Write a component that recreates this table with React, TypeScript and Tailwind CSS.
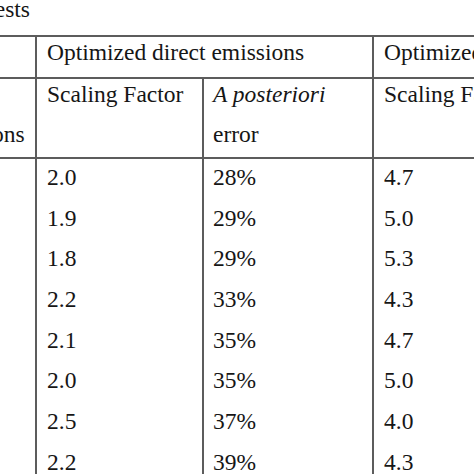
import React from "react";

const rows: [string, string, string][] = [
  ["2.0", "28%", "4.7"],
  ["1.9", "29%", "5.0"],
  ["1.8", "29%", "5.3"],
  ["2.2", "33%", "4.3"],
  ["2.1", "35%", "4.7"],
  ["2.0", "35%", "5.0"],
  ["2.5", "37%", "4.0"],
  ["2.2", "39%", "4.3"],
];

export default function App() {
  return (
    <div
      className="w-[474px] h-[474px] overflow-hidden bg-white text-[#161616] text-[23.5px]"
      style={{ fontFamily: '"Liberation Serif", "Times New Roman", serif' }}
    >
      <div className="h-[35px] w-[30px] flex justify-end whitespace-nowrap leading-[18px]">
        <span>Table 3. Results of the sensitivity tests</span>
      </div>
      <div className="ml-[-84px] w-[800px] border-t-2 border-[#5c5c5c] whitespace-nowrap">
        {/* header row 1 */}
        <div className="flex h-[42px] border-b-2 border-[#5c5c5c] leading-[30px]">
          <div className="w-[121px] shrink-0 border-r-2 border-[#5c5c5c]" />
          <div className="w-[337px] shrink-0 border-r-2 border-[#5c5c5c] pl-[10px]">
            Optimized direct emissions
          </div>
          <div className="w-[300px] shrink-0 pl-[10px]">Optimized total emissions</div>
        </div>
        {/* header row 2 */}
        <div className="flex h-[80px] border-b-2 border-[#5c5c5c] leading-[30px]">
          <div className="w-[121px] shrink-0 border-r-2 border-[#5c5c5c] pl-[12px] flex flex-col gap-[10px]">
            <div>Prior</div>
            <div>Emissions</div>
          </div>
          <div className="w-[167px] shrink-0 border-r-2 border-[#5c5c5c] pl-[10px]">
            Scaling Factor
          </div>
          <div className="w-[170px] shrink-0 border-r-2 border-[#5c5c5c] pl-[9px] flex flex-col gap-[10px]">
            <div className="italic">A posteriori</div>
            <div>error</div>
          </div>
          <div className="w-[300px] shrink-0 pl-[10px]">Scaling Factor</div>
        </div>
        {/* data */}
        {rows.map((r, i) => (
          <div key={i} className="flex h-[40.7px] leading-[36px]">
            <div className="w-[121px] shrink-0 border-r-2 border-[#5c5c5c]" />
            <div className="w-[167px] shrink-0 border-r-2 border-[#5c5c5c] pl-[10px]">{r[0]}</div>
            <div className="w-[170px] shrink-0 border-r-2 border-[#5c5c5c] pl-[9px]">{r[1]}</div>
            <div className="w-[300px] shrink-0 pl-[10px]">{r[2]}</div>
          </div>
        ))}
      </div>
    </div>
  );
}
